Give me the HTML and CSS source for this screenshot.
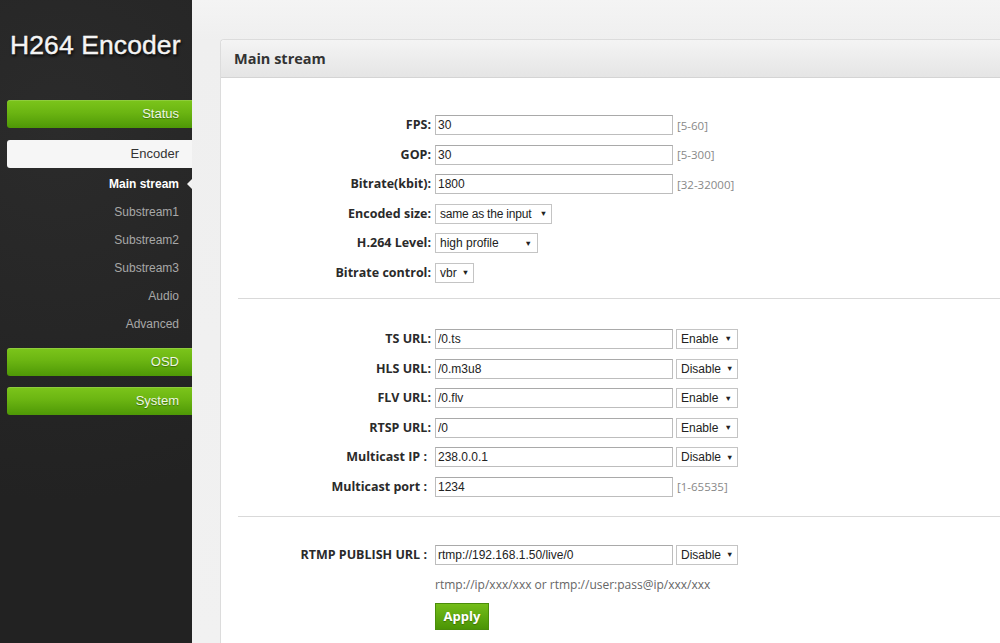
FILE: index.html
```html
<!DOCTYPE html>
<html lang="en">
<head>
  <meta charset="UTF-8" />
  <title>H264 Encoder - Main stream</title>
  <link rel="stylesheet" href="styles.css">
</head>
<body>
  <div class="page">
    <div class="sidebar">
      <h1 class="logo">H264 Encoder</h1>
      <a class="nav-btn green first">Status</a>
      <a class="nav-btn active">Encoder</a>
      <ul class="sub-menu">
        <li class="current">Main stream</li>
        <li>Substream1</li>
        <li>Substream2</li>
        <li>Substream3</li>
        <li>Audio</li>
        <li>Advanced</li>
      </ul>
      <a class="nav-btn green">OSD</a>
      <a class="nav-btn green">System</a>
    </div>

    <div class="main">
      <div class="panel">
        <div class="panel-head">Main stream</div>
        <div class="panel-body">
          <div class="form-grid first-block">
            <label>FPS:</label>
            <div class="field"><input class="txt" value="30"><span class="range">[5-60]</span></div>
            <label>GOP:</label>
            <div class="field"><input class="txt" value="30"><span class="range">[5-300]</span></div>
            <label>Bitrate(kbit):</label>
            <div class="field"><input class="txt" value="1800"><span class="range">[32-32000]</span></div>
            <label>Encoded size:</label>
            <div class="field"><span class="sel w-size">same as the input<i>&#9660;</i></span></div>
            <label>H.264 Level:</label>
            <div class="field"><span class="sel w-level">high profile<i>&#9660;</i></span></div>
            <label>Bitrate control:</label>
            <div class="field"><span class="sel w-rc">vbr<i>&#9660;</i></span></div>
          </div>

          <hr class="sep">

          <div class="form-grid second-block">
            <label>TS URL:</label>
            <div class="field"><input class="txt" value="/0.ts"><span class="sel w-en">Enable<i>&#9660;</i></span></div>
            <label>HLS URL:</label>
            <div class="field"><input class="txt" value="/0.m3u8"><span class="sel w-en">Disable<i>&#9660;</i></span></div>
            <label>FLV URL:</label>
            <div class="field"><input class="txt" value="/0.flv"><span class="sel w-en">Enable<i>&#9660;</i></span></div>
            <label>RTSP URL:</label>
            <div class="field"><input class="txt" value="/0"><span class="sel w-en">Enable<i>&#9660;</i></span></div>
            <label class="pad">Multicast IP :</label>
            <div class="field"><input class="txt" value="238.0.0.1"><span class="sel w-en">Disable<i>&#9660;</i></span></div>
            <label class="pad">Multicast port :</label>
            <div class="field"><input class="txt" value="1234"><span class="range">[1-65535]</span></div>
          </div>

          <hr class="sep sep-2">

          <div class="form-grid third-block">
            <label class="pad">RTMP PUBLISH URL :</label>
            <div class="field"><input class="txt" value="rtmp://192.168.1.50/live/0"><span class="sel w-en">Disable<i>&#9660;</i></span></div>
            <span></span>
            <div class="hint">rtmp://ip/xxx/xxx or rtmp://user:pass@ip/xxx/xxx</div>
            <span></span>
            <div class="field apply-row"><button class="apply">Apply</button></div>
          </div>
        </div>
      </div>
    </div>
  </div>
</body>
</html>
```

FILE: styles.css
```css
html, body {
  margin: 0;
  height: 100%;
  overflow: hidden;
}
body {
  font-family: "Liberation Sans", Arial, sans-serif;
  background: #f2f2f2;
  color: #333;
}
.page {
  display: flex;
  height: 643px;
}

/* sidebar */
.sidebar {
  width: 192px;
  flex-shrink: 0;
  background: #252525;
  background-image: radial-gradient(circle at 30% 20%, #2b2b2b 0, #222 70%);
  padding-top: 29px;
  box-sizing: border-box;
}
.logo {
  margin: 0 0 0 10px;
  font-size: 26.5px;
  font-weight: normal;
  color: #f4f4f4;
  line-height: 32px;
  text-shadow: 1px 2px 3px #000;
  -webkit-text-stroke: 0.4px #f4f4f4;
  letter-spacing: 0.1px;
}
.nav-btn {
  display: block;
  margin-left: 7px;
  height: 28px;
  line-height: 28px;
  text-align: right;
  padding-right: 13px;
  font-size: 13px;
  border-radius: 3px 0 0 3px;
  cursor: pointer;
}
.nav-btn.first { margin-top: 39px; }
.nav-btn.green {
  color: #eef7e2;
  background: linear-gradient(to bottom, #7cc51b 0%, #6bb512 45%, #4e9806 100%);
  text-shadow: 0 1px 1px rgba(0,0,0,0.35);
  box-shadow: inset 0 1px 0 rgba(255,255,255,0.15);
}
.nav-btn.active {
  margin-top: 12px;
  background: #f6f6f6;
  color: #333;
}
.sub-menu {
  list-style: none;
  margin: 0;
  padding: 2px 0 10px;
}
.sub-menu li {
  height: 28px;
  line-height: 28px;
  text-align: right;
  padding-right: 13px;
  font-size: 12px;
  color: #a8a8a8;
  position: relative;
}
.sub-menu li.current {
  color: #fff;
  font-weight: bold;
}
.sub-menu li.current::after {
  content: "";
  position: absolute;
  right: 0;
  top: 9px;
  border-top: 5px solid transparent;
  border-bottom: 5px solid transparent;
  border-right: 5px solid #f2f2f2;
}
.nav-btn + .nav-btn.green { margin-top: 11px; }

/* main area */
.main {
  flex: 1;
  padding: 39px 0 0 28px;
  background: linear-gradient(to bottom, #f4f4f4 0, #efefef 40px, #f1f1f1 100%);
}
.panel {
  background: #fff;
  border-left: 1px solid #dcdcdc;
  border-top: 1px solid #dcdcdc;
  border-radius: 4px 0 0 0;
  height: 100%;
}
.panel-head {
  height: 37px;
  line-height: 37px;
  padding-left: 13px;
  font-family: "Open Sans", "Liberation Sans", sans-serif;
  font-weight: bold;
  font-size: 14.5px;
  color: #333;
  background: linear-gradient(to bottom, #f4f4f4, #e5e5e5);
  border-bottom: 1px solid #d4d4d4;
  border-radius: 4px 0 0 0;
}
.panel-body {
  padding-top: 37px;
}
.form-grid {
  display: grid;
  grid-template-columns: 210px 1fr;
  column-gap: 4px;
  row-gap: 9.6px;
  align-items: center;
}
.form-grid label {
  text-align: right;
  font-family: "Open Sans", "Liberation Sans", sans-serif;
  font-weight: bold;
  font-size: 12.5px;
  color: #2a2a2a;
  line-height: 20px;
}
.form-grid label.pad { padding-right: 4px; }
.field {
  display: flex;
  align-items: center;
  height: 20px;
}
.txt {
  box-sizing: border-box;
  width: 238px;
  height: 20px;
  margin: 0;
  padding: 0 2px;
  border: 1px solid #bdbdbd;
  border-top-color: #a9a9a9;
  font-family: "Liberation Sans", Arial, sans-serif;
  font-size: 12px;
  color: #222;
  background: #fff;
}
.range {
  margin-left: 4px;
  font-family: "Open Sans", "Liberation Sans", sans-serif;
  font-size: 11.5px;
  color: #888;
}
.sel {
  box-sizing: border-box;
  display: inline-flex;
  align-items: center;
  justify-content: space-between;
  white-space: nowrap;
  height: 20px;
  padding: 0 5px 0 4px;
  border: 1px solid #c4c4c4;
  background: #fff;
  font-size: 12px;
  color: #222;
}
.sel i {
  font-style: normal;
  font-size: 7.5px;
  margin-left: 5px;
}
.txt + .sel { margin-left: 3px; }
.w-size { width: 117px; padding-right: 4px; letter-spacing: -0.2px; }
.w-level { width: 103px; }
.w-rc { width: 39px; }
.w-en { width: 62px; }

.sep {
  margin: 15px 0 0 17px;
  border: 0;
  border-top: 1px solid #d9d9d9;
}
.sep-2 { margin-top: 19px; }
.second-block { margin-top: 30px; }
.third-block { margin-top: 28px; }
.hint {
  font-family: "Open Sans", "Liberation Sans", sans-serif;
  font-size: 12px;
  color: #666;
  line-height: 20px;
}
.apply-row {
  height: 28px;
  margin-top: -2px;
}
.apply {
  width: 54px;
  height: 27px;
  border: 1px solid #4a8d0a;
  background: linear-gradient(to bottom, #74bd19 0%, #5ea90f 50%, #4b9405 100%);
  color: #fff;
  font-family: "Open Sans", "Liberation Sans", sans-serif;
  font-weight: bold;
  font-size: 13px;
  padding: 0;
  text-shadow: 0 1px 1px rgba(0,0,0,0.3);
  cursor: pointer;
}
```
